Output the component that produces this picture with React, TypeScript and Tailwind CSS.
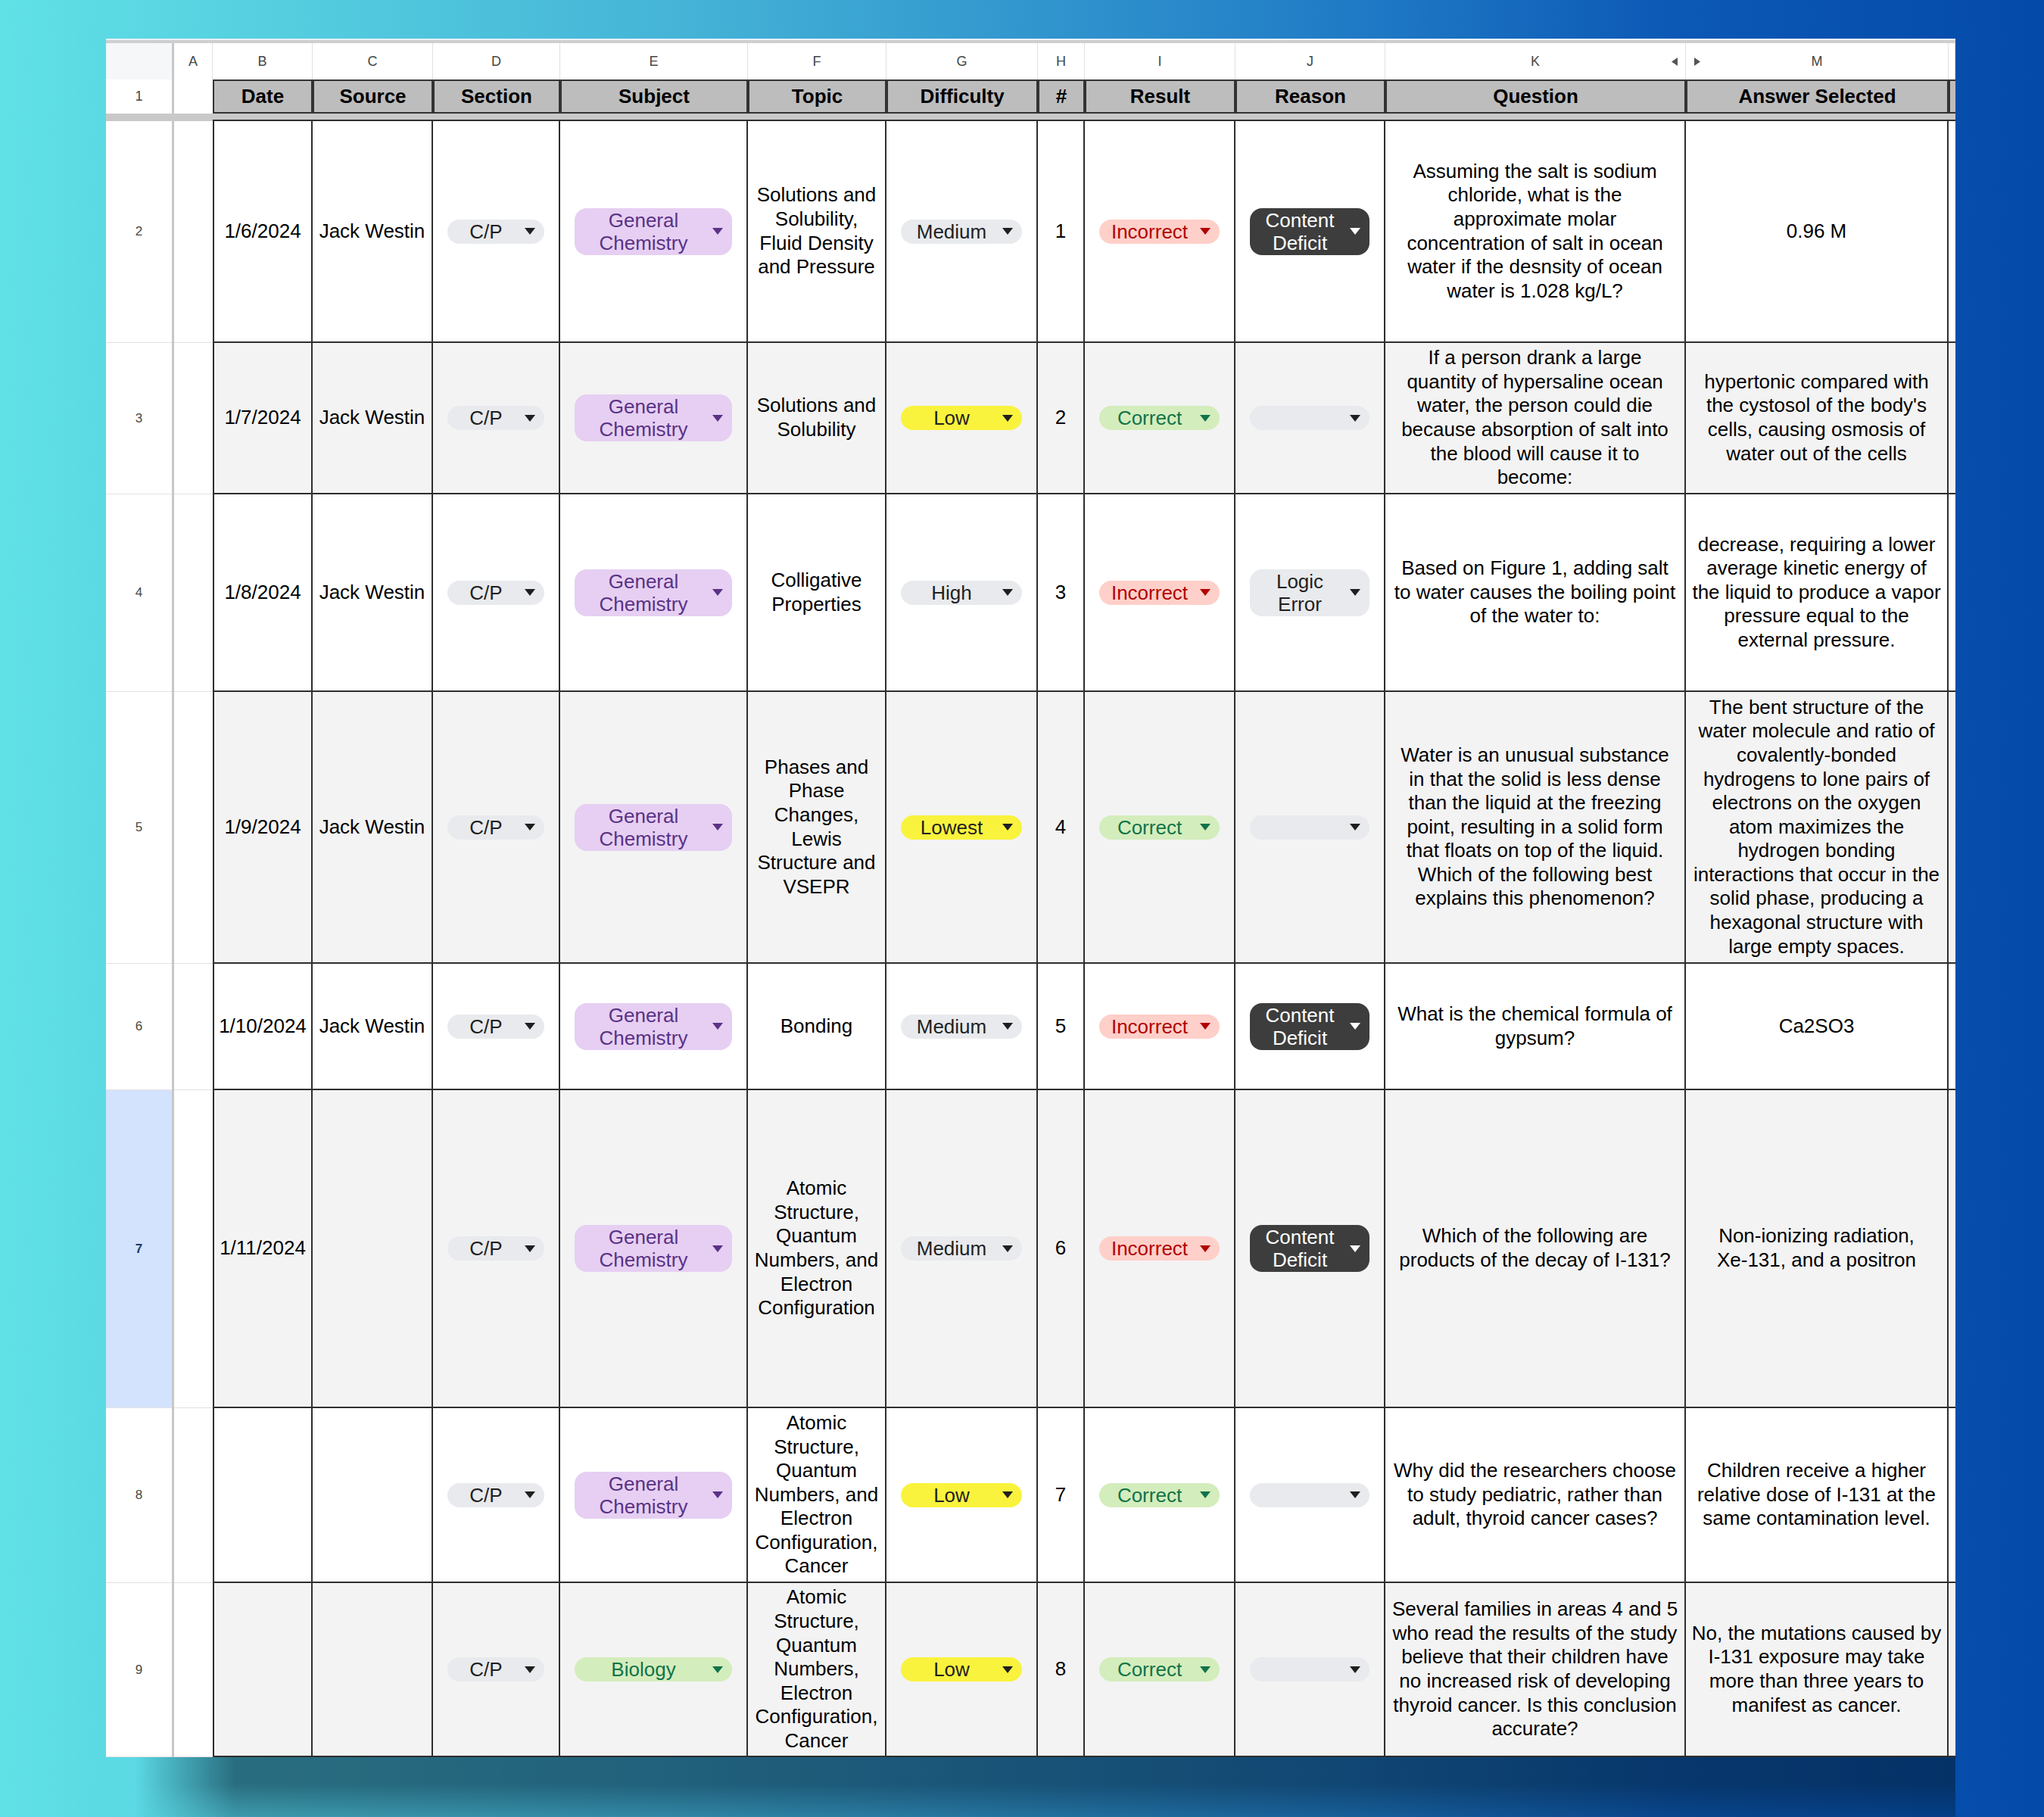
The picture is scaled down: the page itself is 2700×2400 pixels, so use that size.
import React from 'react';

type Tone = 'gray' | 'purple' | 'green' | 'red' | 'yellow' | 'dark';

const TONES: Record<Tone, string> = {
    gray: 'bg-[#e8eaed] text-[#1f1f1f]',
    purple: 'bg-[#e6cff2] text-[#5a3286]',
    green: 'bg-[#d4edbc] text-[#11734b]',
    red: 'bg-[#ffcfc9] text-[#b10202]',
    yellow: 'bg-[#f9f33d] text-[#1f1f1f]',
    dark: 'bg-[#3d3d3d] text-white',
};

// row number | frozen divider | A .. K, M | sliver of N
const GRID = 'grid grid-cols-[87px_3px_51px_132px_159px_168px_248px_183px_200px_62px_199px_198px_397px_347px_9px]';

const LETTERS = ['A', 'B', 'C', 'D', 'E', 'F', 'G', 'H', 'I', 'J', 'K', 'M', ''];
const HEADERS = ['Date', 'Source', 'Section', 'Subject', 'Topic', 'Difficulty', '#', 'Result', 'Reason', 'Question', 'Answer Selected'];

type Row = {
    n: number;
    h: string;
    shade: boolean;
    selected?: boolean;
    date: string;
    source: string;
    subject: [string, Tone];
    topic: string;
    diff: [string, Tone];
    num: string;
    result: [string, Tone];
    reason: [string, Tone];
    question: string;
    answer: string;
};

const GC: [string, Tone] = ['General\nChemistry', 'purple'];
const WRONG: [string, Tone] = ['Incorrect', 'red'];
const RIGHT: [string, Tone] = ['Correct', 'green'];
const DEFICIT: [string, Tone] = ['Content\nDeficit', 'dark'];
const NONE: [string, Tone] = ['', 'gray'];

const ROWS: Row[] = [
    {
        n: 2, h: 'h-[293px]', shade: false, date: '1/6/2024', source: 'Jack Westin', subject: GC,
        topic: 'Solutions and\nSolubility,\nFluid Density\nand Pressure',
        diff: ['Medium', 'gray'], num: '1', result: WRONG, reason: DEFICIT,
        question: 'Assuming the salt is sodium\nchloride, what is the\napproximate molar\nconcentration of salt in ocean\nwater if the desnsity of ocean\nwater is 1.028 kg/L?',
        answer: '0.96 M',
    },
    {
        n: 3, h: 'h-[200px]', shade: true, date: '1/7/2024', source: 'Jack Westin', subject: GC,
        topic: 'Solutions and\nSolubility',
        diff: ['Low', 'yellow'], num: '2', result: RIGHT, reason: NONE,
        question: 'If a person drank a large\nquantity of hypersaline ocean\nwater, the person could die\nbecause absorption of salt into\nthe blood will cause it to\nbecome:',
        answer: "hypertonic compared with\nthe cystosol of the body's\ncells, causing osmosis of\nwater out of the cells",
    },
    {
        n: 4, h: 'h-[261px]', shade: false, date: '1/8/2024', source: 'Jack Westin', subject: GC,
        topic: 'Colligative\nProperties',
        diff: ['High', 'gray'], num: '3', result: WRONG, reason: ['Logic\nError', 'gray'],
        question: 'Based on Figure 1, adding salt\nto water causes the boiling point\nof the water to:',
        answer: 'decrease, requiring a lower\naverage kinetic energy of\nthe liquid to produce a vapor\npressure equal to the\nexternal pressure.',
    },
    {
        n: 5, h: 'h-[359px]', shade: true, date: '1/9/2024', source: 'Jack Westin', subject: GC,
        topic: 'Phases and\nPhase\nChanges,\nLewis\nStructure and\nVSEPR',
        diff: ['Lowest', 'yellow'], num: '4', result: RIGHT, reason: NONE,
        question: 'Water is an unusual substance\nin that the solid is less dense\nthan the liquid at the freezing\npoint, resulting in a solid form\nthat floats on top of the liquid.\nWhich of the following best\nexplains this phenomenon?',
        answer: 'The bent structure of the\nwater molecule and ratio of\ncovalently-bonded\nhydrogens to lone pairs of\nelectrons on the oxygen\natom maximizes the\nhydrogen bonding\ninteractions that occur in the\nsolid phase, producing a\nhexagonal structure with\nlarge empty spaces.',
    },
    {
        n: 6, h: 'h-[167px]', shade: false, date: '1/10/2024', source: 'Jack Westin', subject: GC,
        topic: 'Bonding',
        diff: ['Medium', 'gray'], num: '5', result: WRONG, reason: DEFICIT,
        question: 'What is the chemical formula of\ngypsum?',
        answer: 'Ca2SO3',
    },
    {
        n: 7, h: 'h-[420px]', shade: true, selected: true, date: '1/11/2024', source: '', subject: GC,
        topic: 'Atomic\nStructure,\nQuantum\nNumbers, and\nElectron\nConfiguration',
        diff: ['Medium', 'gray'], num: '6', result: WRONG, reason: DEFICIT,
        question: 'Which of the following are\nproducts of the decay of I-131?',
        answer: 'Non-ionizing radiation,\nXe-131, and a positron',
    },
    {
        n: 8, h: 'h-[231px]', shade: false, date: '', source: '', subject: GC,
        topic: 'Atomic\nStructure,\nQuantum\nNumbers, and\nElectron\nConfiguration,\nCancer',
        diff: ['Low', 'yellow'], num: '7', result: RIGHT, reason: NONE,
        question: 'Why did the researchers choose\nto study pediatric, rather than\nadult, thyroid cancer cases?',
        answer: 'Children receive a higher\nrelative dose of I-131 at the\nsame contamination level.',
    },
    {
        n: 9, h: 'h-[230px]', shade: true, date: '', source: '', subject: ['Biology', 'green'],
        topic: 'Atomic\nStructure,\nQuantum\nNumbers,\nElectron\nConfiguration,\nCancer',
        diff: ['Low', 'yellow'], num: '8', result: RIGHT, reason: NONE,
        question: 'Several families in areas 4 and 5\nwho read the results of the study\nbelieve that their children have\nno increased risk of developing\nthyroid cancer. Is this conclusion\naccurate?',
        answer: 'No, the mutations caused by\nI-131 exposure may take\nmore than three years to\nmanifest as cancer.',
    },
];

function Caret() {
    return (
        <svg width="14" height="9" viewBox="0 0 14 9" className="shrink-0">
            <path d="M0 0h14L7 9z" fill="currentColor" />
        </svg>
    );
}

function Chip({ label, tone }: { label: string; tone: Tone }) {
    return (
        <div className={`flex w-full items-center gap-2 rounded-[16px] py-px pl-2 pr-3 ${TONES[tone]}`}>
            <span className="min-h-[30px] flex-1 whitespace-pre text-center leading-[30px]">{label}</span>
            <Caret />
        </div>
    );
}

function Cell({ children, className = '' }: { children?: React.ReactNode; className?: string }) {
    return (
        <div className={`flex items-center justify-center overflow-hidden border-r-2 border-b-2 border-[#2e2e2e] text-center ${className}`}>
            {children}
        </div>
    );
}

function Text({ children }: { children: string }) {
    return <span className="whitespace-pre leading-[31.6px]">{children}</span>;
}

function BodyRow({ row }: { row: Row }) {
    const bg = row.shade ? 'bg-[#f3f3f3]' : 'bg-white';
    return (
        <div className={`${GRID} ${row.h}`}>
            <div className={`flex items-center justify-center border-b border-[#e2e2e2] text-[17px] ${row.selected ? 'bg-[#d3e3fd] font-bold text-[#1b3a6b]' : 'bg-white text-[#444746]'}`}>
                {row.n}
            </div>
            <div className="bg-[#c7c7c7]" />
            <div className="border-b border-[#e2e2e2] bg-white" />
            <Cell className={`border-l-2 ${bg}`}><Text>{row.date}</Text></Cell>
            <Cell className={bg}><Text>{row.source}</Text></Cell>
            <Cell className={`px-[19px] ${bg}`}><Chip label="C/P" tone="gray" /></Cell>
            <Cell className={`px-[19px] ${bg}`}><Chip label={row.subject[0]} tone={row.subject[1]} /></Cell>
            <Cell className={bg}><Text>{row.topic}</Text></Cell>
            <Cell className={`px-[19px] ${bg}`}><Chip label={row.diff[0]} tone={row.diff[1]} /></Cell>
            <Cell className={bg}><Text>{row.num}</Text></Cell>
            <Cell className={`px-[19px] ${bg}`}><Chip label={row.result[0]} tone={row.result[1]} /></Cell>
            <Cell className={`px-[19px] ${bg}`}><Chip label={row.reason[0]} tone={row.reason[1]} /></Cell>
            <Cell className={bg}><Text>{row.question}</Text></Cell>
            <Cell className={bg}><Text>{row.answer}</Text></Cell>
            <div className={`border-b-2 border-[#2e2e2e] ${bg}`} />
        </div>
    );
}

export default function App() {
    return (
        <div className="relative h-[2400px] w-[2700px] overflow-hidden bg-[linear-gradient(90deg,#60e1e6_0%,#45b4d7_33%,#1f79c5_67%,#0c58b5_82%,#044aa9_100%)] font-['Liberation_Sans',Arial,sans-serif] text-[26px] text-black">
            <div className="ml-[140px] mt-[51px] w-[2443px]">
                <div className="h-[2px] bg-[#e6f0fa]" />
                <div className="h-[4px] bg-[#cfcfcf]" />

                {/* column letters */}
                <div className={`${GRID} h-[48px] text-[18px] text-[#444746]`}>
                    <div className="bg-[#f6f7f8]" />
                    <div className="bg-[#c7c7c7]" />
                    {LETTERS.map((l, i) => (
                        <div key={i} className="relative flex items-center justify-center border-r border-[#e1e1e1] bg-white">
                            {l}
                            {l === 'K' && (
                                <svg width="8" height="11" viewBox="0 0 8 11" className="absolute right-[10px] top-[19px]">
                                    <path d="M8 0v11L0 5.5z" fill="#555" />
                                </svg>
                            )}
                            {l === 'M' && (
                                <svg width="8" height="11" viewBox="0 0 8 11" className="absolute left-[11px] top-[19px]">
                                    <path d="M0 0v11l8-5.5z" fill="#555" />
                                </svg>
                            )}
                        </div>
                    ))}
                </div>

                {/* frozen header row */}
                <div className={`${GRID} h-[45px]`}>
                    <div className="flex items-center justify-center bg-white text-[18px] text-[#444746]">1</div>
                    <div className="bg-[#c7c7c7]" />
                    <div className="bg-white" />
                    {HEADERS.map(h => (
                        <div key={h} className="flex items-center justify-center border-2 border-[#333] bg-[#bdbdbd] font-bold">
                            {h}
                        </div>
                    ))}
                    <div className="border-y-2 border-l-2 border-[#333] bg-[#bdbdbd]" />
                </div>

                <div className="flex h-[10px]">
                    <div className="w-[141px] bg-[#c9c9c9]" />
                    <div className="flex-1 border-b-2 border-[#2e2e2e] bg-[#c9c9c9]" />
                </div>

                {ROWS.map(r => <BodyRow key={r.n} row={r} />)}
            </div>

            {/* shadow under the sheet */}
            <div className="absolute left-[180px] top-[2321px] h-[79px] w-[2403px] bg-[linear-gradient(90deg,rgba(4,28,48,0)_0px,rgba(4,28,48,0.55)_130px)] [mask-image:linear-gradient(to_bottom,black_45%,rgba(0,0,0,0.55))]" />
        </div>
    );
}
